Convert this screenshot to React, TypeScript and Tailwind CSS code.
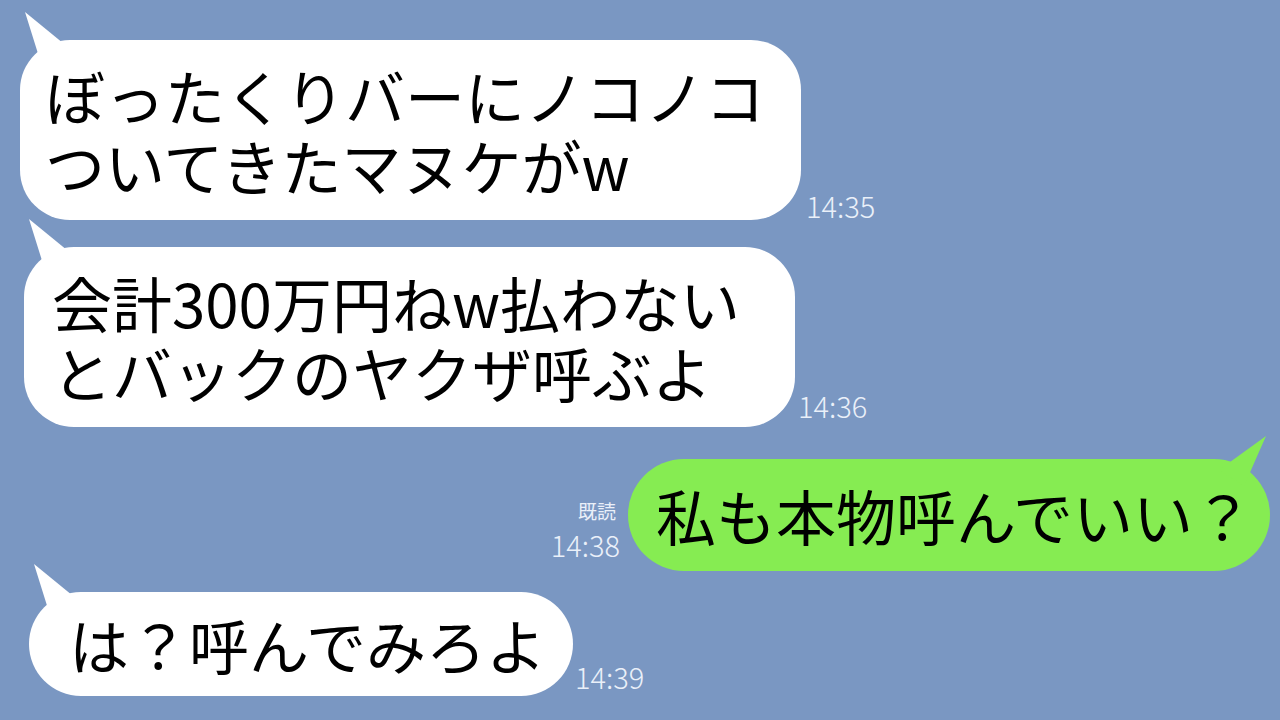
const jp = { fontFamily: '"Noto Sans CJK JP", "Noto Sans", sans-serif' };

function LeftTail() {
  return (
    <svg className="absolute left-0 top-[-28px] h-[60px] w-[60px]" viewBox="0 0 60 60">
      <polygon points="5,0 20,48 49,36" fill="#ffffff" />
    </svg>
  );
}

function RightTail() {
  return (
    <svg className="absolute right-0 top-[-23px] h-[60px] w-[60px]" viewBox="0 0 60 60">
      <polygon points="56,0 9,34 34,50" fill="#86ec52" />
    </svg>
  );
}

function Time({ t }: { t: string }) {
  return <span className="font-light text-[29px] leading-[29px] text-[#eaf0f9]">{t}</span>;
}

export default function App() {
  return (
    <div className="w-[1280px] h-[720px] overflow-hidden bg-[#7a97c2]" style={jp}>
      <div className="flex flex-col pt-[40px]">
        {/* 1 */}
        <div className="flex items-end gap-[5px] pl-[20px]">
          <div className="relative rounded-[50px] bg-white pl-[25px] pr-[36px] py-[20px] text-[60px] leading-[70px] text-black whitespace-nowrap">
            <LeftTail />
            <div className="relative">ぼったくりバーにノコノコ</div>
            <div className="relative">ついてきたマヌケがw</div>
          </div>
          <Time t="14:35" />
        </div>

        {/* 2 */}
        <div className="mt-[27px] flex items-end gap-[3px] pl-[24px]">
          <div className="relative rounded-[50px] bg-white pl-[28px] pr-[55px] py-[20px] text-[60px] leading-[70px] text-black whitespace-nowrap">
            <LeftTail />
            <div className="relative">会計300万円ねw払わない</div>
            <div className="relative">とバックのヤクザ呼ぶよ</div>
          </div>
          <div className="mb-[4px]">
            <Time t="14:36" />
          </div>
        </div>

        {/* 3 */}
        <div className="mt-[32px] flex items-end justify-end gap-[8px] pr-[10px]">
          <div className="flex flex-col items-end mb-[12px]">
            <span className="text-[19px] leading-[20px] text-[#eaf0f9] mb-[9px] mr-[4px]">既読</span>
            <Time t="14:38" />
          </div>
          <div className="relative rounded-[56px] bg-[#86ec52] pl-[28px] pr-[17px] py-[21px] text-[60px] leading-[70px] text-black whitespace-nowrap">
            <RightTail />
            <div className="relative">私も本物呼んでいい？</div>
          </div>
        </div>

        {/* 4 */}
        <div className="mt-[21px] flex items-end gap-[2px] pl-[29px]">
          <div className="relative rounded-[52px] bg-white pl-[40px] pr-[27px] py-[17px] text-[60px] leading-[70px] text-black whitespace-nowrap">
            <LeftTail />
            <div className="relative">は？呼んでみろよ</div>
          </div>
          <div className="mb-[2px]">
            <Time t="14:39" />
          </div>
        </div>
      </div>
    </div>
  );
}
